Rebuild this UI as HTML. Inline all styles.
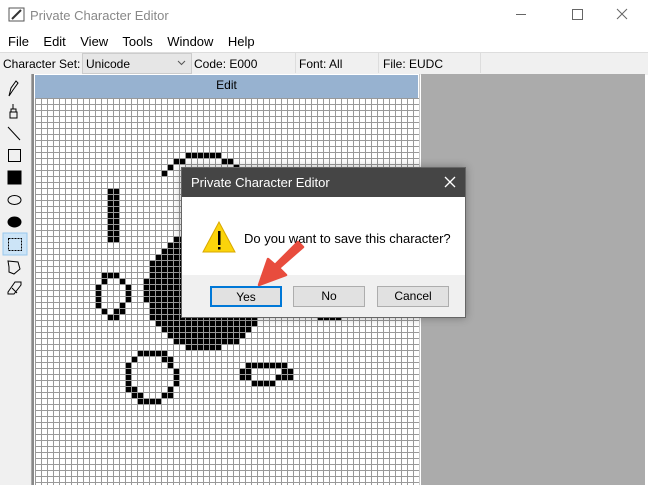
<!DOCTYPE html><html><head><style>
body{margin:0;width:648px;height:485px;overflow:hidden;background:#fff;font-family:"Liberation Sans",sans-serif;font-size:12px;position:relative}
.a{position:absolute}
</style></head><body>
<div class="a" style="left:0;top:0;width:648px;height:30px;background:#fff"></div>
<svg class="a" style="left:8px;top:7px" width="18" height="16"><rect x="1" y="1" width="15" height="13" fill="#fff" stroke="#555"/><path d="M4 12 L13 3" stroke="#333" stroke-width="2"/></svg>
<div class="a" style="left:30px;top:8px;font-size:13px;color:#888">Private Character Editor</div>
<div class="a" style="left:516px;top:14px;width:10px;height:1px;background:#666"></div>
<div class="a" style="left:572px;top:9px;width:9px;height:9px;border:1px solid #666"></div>
<svg class="a" style="left:616px;top:8px" width="12" height="12"><path d="M1 1L11 11M11 1L1 11" stroke="#666"/></svg>
<div class="a" style="left:8px;top:34px;font-size:13px;color:#000;word-spacing:0">File&nbsp;&nbsp;&nbsp; Edit&nbsp;&nbsp;&nbsp; View&nbsp;&nbsp;&nbsp; Tools&nbsp;&nbsp;&nbsp; Window&nbsp;&nbsp;&nbsp; Help</div>
<div class="a" style="left:0;top:52px;width:648px;height:22px;background:#f0f0f0;border-top:1px solid #ddd"></div>
<div class="a" style="left:3px;top:57px">Character Set:</div>
<div class="a" style="left:82px;top:53px;width:108px;height:19px;background:#e6e6e6;border:1px solid #ccc"></div>
<div class="a" style="left:86px;top:57px">Unicode</div>
<svg class="a" style="left:177px;top:60px" width="9" height="6"><path d="M1 1L4.5 4.5L8 1" stroke="#555" fill="none"/></svg>
<div class="a" style="left:194px;top:57px">Code: E000</div>
<div class="a" style="left:295px;top:53px;width:1px;height:20px;background:#ddd"></div>
<div class="a" style="left:299px;top:57px">Font: All</div>
<div class="a" style="left:378px;top:53px;width:1px;height:20px;background:#ddd"></div>
<div class="a" style="left:383px;top:57px">File: EUDC</div>
<div class="a" style="left:480px;top:53px;width:1px;height:20px;background:#ddd"></div>
<div class="a" style="left:0;top:74px;width:31px;height:411px;background:#f0f0f0;border-right:1px solid #aaa"></div>
<svg class="a" style="left:0;top:74px" width="31" height="230" fill="none" stroke="#000">
<path d="M9 22 L11 14 L16 7 L18 9 L13 16 Z"/>
<path d="M13 30 v5 M11 35h5v3h-5zM10 38h7v6h-7z"/>
<path d="M8 53 L20 66"/>
<rect x="8.5" y="75.5" width="12" height="12"/>
<rect x="8" y="97" width="13" height="13" fill="#000"/>
<ellipse cx="14.5" cy="126" rx="6.5" ry="4.5"/>
<ellipse cx="14.5" cy="148" rx="6.5" ry="5" fill="#000"/>
<rect x="3" y="159" width="24" height="22" fill="#cce4f7" stroke="#99c8ee"/>
<rect x="8.5" y="164.5" width="13" height="12" stroke-dasharray="2 1"/>
<path d="M8 187 L18 188 L20 195 L14 200 L9 198 L9 193 Z"/>
<path d="M8 218 L15 208 L21 208 L21 211 L14 220 L8 220 Z M12 214 l5 5"/>
</svg>
<div class="a" style="left:421px;top:74px;width:224px;height:411px;background:#ababab"></div>
<div class="a" style="left:32px;top:74px;width:388px;height:411px;background:#fff;border-left:2px solid #888;border-right:1px solid #ccc;box-sizing:border-box"></div>
<div class="a" style="left:35px;top:75px;width:383px;height:23px;background:#97b2d0;text-align:center;line-height:20px">Edit</div>
<div id="g" class="a" style="left:35px;top:98px;width:384px;height:387px;background-color:#fff;background-image:linear-gradient(90deg,#999 0,#999 1px,transparent 1px),linear-gradient(#999 0,#999 1px,transparent 1px);background-size:6px 6px"></div>
<div class="a" style="left:181px;top:167px;width:285px;height:151px;border:1px solid #666;box-sizing:border-box;background:#fff;box-shadow:0 0 8px rgba(0,0,0,.3)"></div>
<div class="a" style="left:182px;top:168px;width:283px;height:29px;background:#454545"></div>
<div class="a" style="left:191px;top:175px;color:#fff;font-size:13px">Private Character Editor</div>
<svg class="a" style="left:444px;top:176px" width="12" height="12"><path d="M1 1L11 11M11 1L1 11" stroke="#fff" stroke-width="1.3"/></svg>
<div class="a" style="left:182px;top:275px;width:283px;height:42px;background:#f0f0f0"></div>
<svg class="a" style="left:202px;top:221px" width="34" height="32"><path d="M17 1 L33 31 L1 31 Z" fill="#fbd40b" stroke="#d9a800"/><rect x="16" y="10" width="2.5" height="14" fill="#000"/><rect x="16" y="26" width="2.5" height="2.5" fill="#000"/></svg>
<div class="a" style="left:244px;top:231px;font-size:13px">Do you want to save this character?</div>
<div class="a" style="left:210px;top:286px;width:72px;height:21px;border:2px solid #0078d7;background:#e1e1e1;box-sizing:border-box;text-align:center;line-height:18px">Yes</div>
<div class="a" style="left:293px;top:286px;width:72px;height:21px;border:1px solid #adadad;background:#e1e1e1;box-sizing:border-box;text-align:center;line-height:19px">No</div>
<div class="a" style="left:377px;top:286px;width:72px;height:21px;border:1px solid #adadad;background:#e1e1e1;box-sizing:border-box;text-align:center;line-height:19px">Cancel</div>
<svg class="a" style="left:0;top:0" width="648" height="485"><path d="M303 247 L279 268 L286 275 L259 285 L268 259 L275 265 L298 242 Z" fill="#e84c3d" stroke="#e84c3d" stroke-width="2.5" stroke-linejoin="round"/></svg>
<script>
var g=document.getElementById('g'),h='';
function on(x,y){
 function ring(cx,cy,rx,ry,t){var d=Math.sqrt(((x-cx)/rx)**2+((y-cy)/ry)**2);return d<=1.02&&d>=1-t}
 if(x>=108&&x<=117&&y>=190&&y<=242)return true;
 var d=Math.sqrt((x-205)**2+(y-290)**2);
 if(d<=60 && Math.sqrt((x-240)**2+(y-270)**2)>40)return true;
 if(ring(112,295,17,23,0.28))return true;
 if(ring(151,376,26,27,0.22))return true;
 if(ring(265,373,27,11,0.4))return true;
 if(ring(203,195,50,42,0.12)&&y<175)return true;
 if(x>318&&x<340&&y>314&&y<320)return true;
 return false;
}
for(var r=0;r<64;r++)for(var c=0;c<64;c++){var x=35+6*c+3,y=98+6*r+3;if(on(x,y))h+='<div style="position:absolute;left:'+(6*c+1)+'px;top:'+(6*r+1)+'px;width:5px;height:5px;background:#000"></div>'}
g.innerHTML=h;
</script>
</body></html>
